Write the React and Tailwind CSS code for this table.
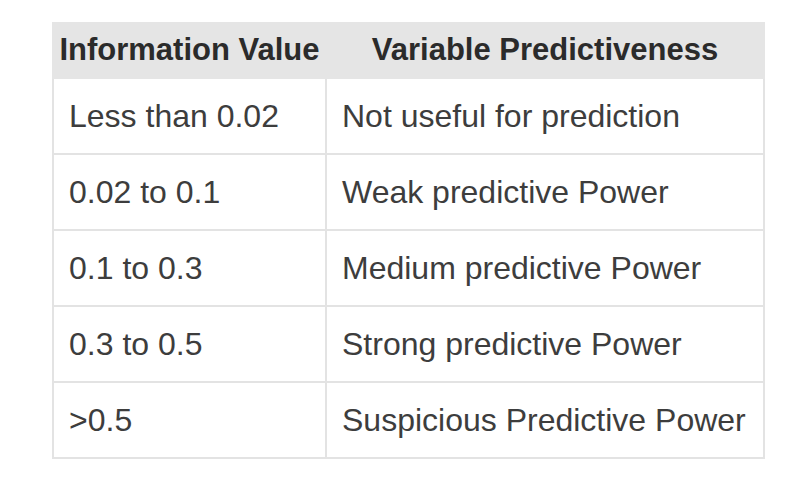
const rows = [
  ["Less than 0.02", "Not useful for prediction"],
  ["0.02 to 0.1", "Weak predictive Power"],
  ["0.1 to 0.3", "Medium predictive Power"],
  ["0.3 to 0.5", "Strong predictive Power"],
  [">0.5", "Suspicious Predictive Power"],
];

export default function App() {
  return (
    <div className="min-h-screen bg-white pl-[52px] pt-[22px] font-['Liberation_Sans',Arial,sans-serif]">
      <table className="table-fixed border-collapse w-[711px]">
        <colgroup>
          <col className="w-[273px]" />
          <col className="w-[438px]" />
        </colgroup>
        <thead>
          <tr className="h-[55px] bg-[#e5e5e5]">
            <th className="border-2 border-[#e5e5e5] text-center text-[31px] font-bold text-[#2b2b2b]">
              Information Value
            </th>
            <th className="border-2 border-[#e5e5e5] text-center text-[31px] font-bold text-[#2b2b2b]">
              Variable Predictiveness
            </th>
          </tr>
        </thead>
        <tbody>
          {rows.map(([iv, label]) => (
            <tr key={iv} className="h-[76px]">
              <td className="border-2 border-[#e3e3e3] pl-[15px] text-[32px] text-[#3d3d3d] whitespace-nowrap">
                {iv}
              </td>
              <td className="border-2 border-[#e3e3e3] pl-[15px] text-[32px] text-[#3d3d3d] whitespace-nowrap">
                {label}
              </td>
            </tr>
          ))}
        </tbody>
      </table>
    </div>
  );
}
